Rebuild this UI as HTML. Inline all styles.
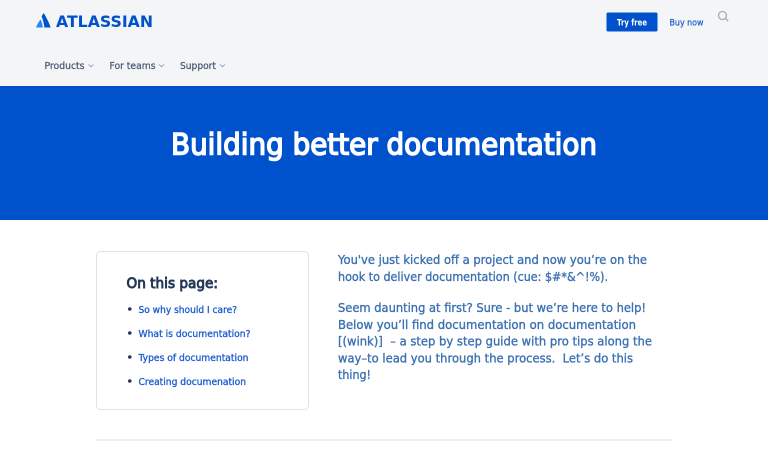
<!DOCTYPE html>
<html><head><meta charset="utf-8"><title>Building better documentation</title>
<style>
html,body{margin:0;padding:0;background:#fff}
body{width:768px;height:461px;overflow:hidden}
svg{display:block;filter:blur(.3px)}
text{font-family:"DejaVu Sans","Liberation Sans",sans-serif;white-space:pre}
</style></head><body>
<svg width="768" height="461" viewBox="0 0 768 461" xmlns="http://www.w3.org/2000/svg">
<rect width="768" height="461" fill="#fff"/>
<rect width="768" height="86" fill="#f4f5f7"/>
<rect y="86" width="768" height="134" fill="#0052cc"/>
<!-- logo -->
<path d="M43.6 13 C46 16.5 49.5 23.5 50.6 27.5 H44.4 C44 23.5 42.8 19 41.6 16.6 C42.2 15.2 42.9 14 43.6 13Z" fill="#0052cc"/>
<path d="M40.6 19.5 C41.8 22 42.6 25 42.8 27.5 H36 C37 24.8 38.8 21.5 40.6 19.5Z" fill="#2684ff"/>
<text x="56" y="27" font-size="16" font-weight="700" fill="#0052cc" textLength="97" lengthAdjust="spacingAndGlyphs">ATLASSIAN</text>
<!-- nav -->
<g font-size="10" fill="#505f79" stroke="#505f79" stroke-width=".3">
<text x="44.5" y="69" textLength="40" lengthAdjust="spacingAndGlyphs">Products</text>
<text x="109.5" y="69" textLength="46" lengthAdjust="spacingAndGlyphs">For teams</text>
<text x="180" y="69" textLength="36" lengthAdjust="spacingAndGlyphs">Support</text>
</g>
<g fill="none" stroke="#7a93c4" stroke-width="0.8">
<path d="M88.5 64.5l2.5 2.3 2.5-2.3"/>
<path d="M159 64.5l2.5 2.3 2.5-2.3"/>
<path d="M220 64.5l2.5 2.3 2.5-2.3"/>
</g>
<!-- CTA -->
<rect x="606.5" y="12.5" width="51" height="19" rx="1.5" fill="#0052cc"/>
<text x="617" y="25.5" font-size="8.5" font-weight="700" fill="#fff" textLength="30" lengthAdjust="spacingAndGlyphs">Try free</text>
<text x="669.5" y="25.5" font-size="9" fill="#2a66cc" stroke="#2a66cc" stroke-width=".3" textLength="34" lengthAdjust="spacingAndGlyphs">Buy now</text>
<circle cx="722.5" cy="15.5" r="4" fill="none" stroke="#a5adba" stroke-width="1.3"/>
<path d="M725.4 18.4l2.8 2.8" stroke="#a5adba" stroke-width="1.4" fill="none"/>
<!-- title -->
<text x="171" y="154.5" font-size="29" fill="#fff" stroke="#fff" stroke-width="1.5" textLength="426" lengthAdjust="spacingAndGlyphs">Building better documentation</text>
<!-- card -->
<rect x="96.5" y="251.5" width="212" height="158" rx="4" fill="#fff" stroke="#dfe1e6"/>
<text x="126.5" y="288" font-size="14.5" fill="#253858" stroke="#253858" stroke-width=".9" textLength="91.5" lengthAdjust="spacingAndGlyphs">On this page:</text>
<g fill="#253858">
<circle cx="129.8" cy="309" r="1.8"/><circle cx="129.8" cy="333" r="1.8"/>
<circle cx="129.8" cy="357" r="1.8"/><circle cx="129.8" cy="381" r="1.8"/>
</g>
<g font-size="10" fill="#1f5fcf" stroke="#1f5fcf" stroke-width=".35">
<text x="138.5" y="313" textLength="98.5" lengthAdjust="spacingAndGlyphs">So why should I care?</text>
<text x="138.5" y="337" textLength="112" lengthAdjust="spacingAndGlyphs">What is documentation?</text>
<text x="138.5" y="361" textLength="110" lengthAdjust="spacingAndGlyphs">Types of documentation</text>
<text x="138.5" y="385" textLength="107.5" lengthAdjust="spacingAndGlyphs">Creating documenation</text>
</g>
<!-- intro -->
<g font-size="12.6" fill="#3a70b0" stroke="#3a70b0" stroke-width=".35">
<text x="338" y="264" textLength="309" lengthAdjust="spacingAndGlyphs">You've just kicked off a project and now you’re on the</text>
<text x="338" y="281" textLength="270" lengthAdjust="spacingAndGlyphs">hook to deliver documentation (cue: $#*&amp;^!%).</text>
<text x="338" y="312" textLength="308" lengthAdjust="spacingAndGlyphs">Seem daunting at first? Sure - but we’re here to help!</text>
<text x="338" y="329" textLength="298" lengthAdjust="spacingAndGlyphs">Below you’ll find documentation on documentation</text>
<text x="338" y="345.5" textLength="314" lengthAdjust="spacingAndGlyphs">[(wink)]  – a step by step guide with pro tips along the</text>
<text x="338" y="362.5" textLength="295" lengthAdjust="spacingAndGlyphs">way–to lead you through the process.  Let’s do this</text>
<text x="338" y="379" textLength="33" lengthAdjust="spacingAndGlyphs">thing!</text>
</g>
<rect x="96" y="439" width="576" height="2" fill="#eeeff1"/>
</svg>
</body></html>
